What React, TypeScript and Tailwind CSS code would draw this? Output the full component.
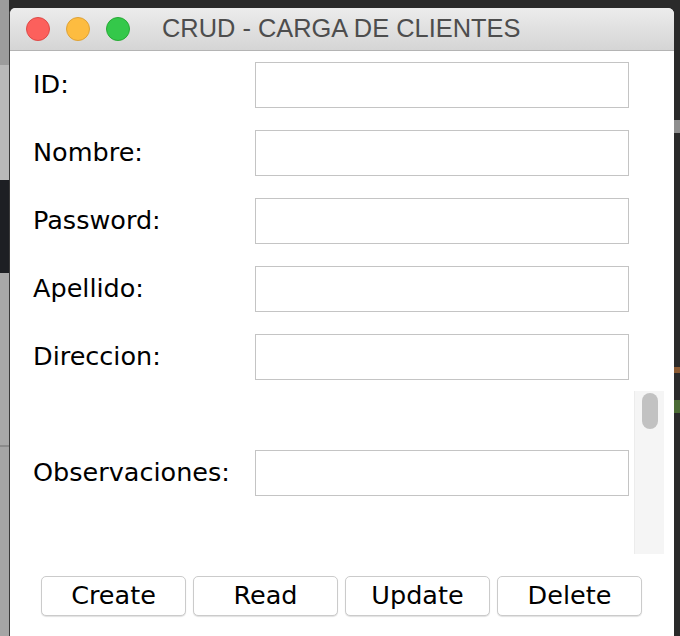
import React from "react";

const FIELDS = ["ID:", "Nombre:", "Password:", "Apellido:", "Direccion:"];
const BUTTONS = ["Create", "Read", "Update", "Delete"];

const UI_FONT = { fontFamily: '"DejaVu Sans", Verdana, sans-serif' };

function Field({ label }: { label: string }) {
  return (
    <div className="flex h-[46px] items-center">
      <span className="w-[222px] text-[25.5px] leading-none text-black" style={UI_FONT}>
        {label}
      </span>
      <div className="h-[46px] w-[374px] border border-[#c4c4c4] bg-white" />
    </div>
  );
}

function Light({ fill, ring }: { fill: string; ring: string }) {
  return <span className={`h-[24px] w-[24px] rounded-full border ${fill} ${ring}`} />;
}

export default function App() {
  return (
    <div
      className="flex h-[636px] w-[680px] overflow-hidden bg-[#2a2a2a]"
      style={{ fontFamily: '"Liberation Sans", Arial, sans-serif' }}
    >
      {/* desktop behind, left side */}
      <div className="flex w-[9px] shrink-0 flex-col">
        <div className="h-[65px] bg-[#9c9c9c]" />
        <div className="h-[115px] bg-[#b9b9b9]" />
        <div className="h-[93px] bg-[#1d1f23]" />
        <div className="h-[172px] bg-[#a8a8a8]" />
        <div className="h-[2px] bg-[#8a8a8a]" />
        <div className="flex-1 bg-[#a5a5a5]" />
      </div>

      {/* window */}
      <div className="mt-[8px] flex w-[665px] shrink-0 flex-col overflow-hidden rounded-t-[6px] border-l border-[#3a3a3a] bg-white">
        <div className="flex h-[43px] shrink-0 items-center border-b border-[#b4b4b4] bg-gradient-to-b from-[#ececec] to-[#d5d5d5] pl-[16px]">
          <div className="flex gap-[16px]">
            <Light fill="bg-[#fc605c]" ring="border-[#de4a47]" />
            <Light fill="bg-[#fdbc40]" ring="border-[#dea236]" />
            <Light fill="bg-[#34c84a]" ring="border-[#27aa35]" />
          </div>
          <span className="ml-[32px] text-[25.4px] leading-none text-[#4d4d4d]">CRUD - CARGA DE CLIENTES</span>
        </div>

        <div className="flex flex-col pl-[23px] pt-[11px]">
          <div className="flex flex-col gap-[22px]">
            {FIELDS.map((f) => (
              <Field key={f} label={f} />
            ))}
          </div>

          <div className="flex h-[196px]">
            <div className="pt-[70px]">
              <Field label="Observaciones:" />
            </div>
            <div className="ml-[5px] mt-[11px] h-[163px] w-[30px] border-l border-[#ececec] bg-[#f5f5f5] pl-[7px] pt-[2px]">
              <div className="h-[36px] w-[16px] rounded-full bg-[#c2c2c2]" />
            </div>
          </div>
        </div>

        <div className="flex gap-[7px] pl-[31px]">
          {BUTTONS.map((b) => (
            <button
              key={b}
              className="flex h-[40px] w-[145px] items-center justify-center rounded-[5px] border border-[#cbcbcb] bg-white text-[25.5px] leading-none text-black shadow-[0_1px_1px_rgba(0,0,0,0.12)]"
              style={UI_FONT}
            >
              {b}
            </button>
          ))}
        </div>
      </div>

      {/* desktop behind, right side */}
      <div className="flex flex-1 flex-col bg-[#2a2a2a]">
        <div className="mt-[120px] h-[13px] bg-[#8e8e8e]" />
        <div className="mt-[234px] h-[6px] bg-[#8a5a33]" />
        <div className="mt-[27px] h-[13px] bg-[#4b6b35]" />
      </div>
    </div>
  );
}
